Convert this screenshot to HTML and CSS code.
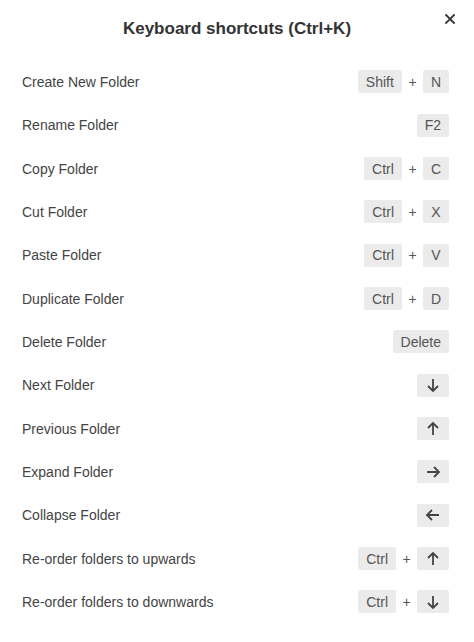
FILE: index.html
```html
<!DOCTYPE html>
<html lang="en">
<head>
    <meta charset="UTF-8">
    <meta name="viewport" content="width=device-width, initial-scale=1.0">
    <title>Keyboard shortcuts</title>
    <link rel="stylesheet" href="styles.css">
</head>
<body>
    <div class="dialog">
        <header class="dialog-header">
            <h1>Keyboard shortcuts (Ctrl+K)</h1>
            <button class="close-btn" aria-label="Close">
                <svg width="10" height="10" viewBox="0 0 10 10">
                    <path d="M1 1 L9 9 M9 1 L1 9" stroke="#333" stroke-width="1.8" stroke-linecap="square"/>
                </svg>
            </button>
        </header>

        <ul class="shortcut-list">
            <li class="row">
                <span class="label">Create New Folder</span>
                <span class="keys"><kbd>Shift</kbd><span class="plus">+</span><kbd>N</kbd></span>
            </li>
            <li class="row">
                <span class="label">Rename Folder</span>
                <span class="keys"><kbd>F2</kbd></span>
            </li>
            <li class="row">
                <span class="label">Copy Folder</span>
                <span class="keys"><kbd>Ctrl</kbd><span class="plus">+</span><kbd>C</kbd></span>
            </li>
            <li class="row">
                <span class="label">Cut Folder</span>
                <span class="keys"><kbd>Ctrl</kbd><span class="plus">+</span><kbd>X</kbd></span>
            </li>
            <li class="row">
                <span class="label">Paste Folder</span>
                <span class="keys"><kbd>Ctrl</kbd><span class="plus">+</span><kbd>V</kbd></span>
            </li>
            <li class="row">
                <span class="label">Duplicate Folder</span>
                <span class="keys"><kbd>Ctrl</kbd><span class="plus">+</span><kbd>D</kbd></span>
            </li>
            <li class="row">
                <span class="label">Delete Folder</span>
                <span class="keys"><kbd>Delete</kbd></span>
            </li>
            <li class="row">
                <span class="label">Next Folder</span>
                <span class="keys"><kbd class="arrow"><svg viewBox="0 0 16 16"><path d="M8 2 V14 M3 9 L8 14 L13 9"/></svg></kbd></span>
            </li>
            <li class="row">
                <span class="label">Previous Folder</span>
                <span class="keys"><kbd class="arrow"><svg viewBox="0 0 16 16"><path d="M8 14 V2 M3 7 L8 2 L13 7"/></svg></kbd></span>
            </li>
            <li class="row">
                <span class="label">Expand Folder</span>
                <span class="keys"><kbd class="arrow"><svg viewBox="0 0 16 16"><path d="M2 8 H14 M9 3 L14 8 L9 13"/></svg></kbd></span>
            </li>
            <li class="row">
                <span class="label">Collapse Folder</span>
                <span class="keys"><kbd class="arrow"><svg viewBox="0 0 16 16"><path d="M14 8 H2 M7 3 L2 8 L7 13"/></svg></kbd></span>
            </li>
            <li class="row">
                <span class="label">Re-order folders to upwards</span>
                <span class="keys"><kbd>Ctrl</kbd><span class="plus">+</span><kbd class="arrow"><svg viewBox="0 0 16 16"><path d="M8 14 V2 M3 7 L8 2 L13 7"/></svg></kbd></span>
            </li>
            <li class="row">
                <span class="label">Re-order folders to downwards</span>
                <span class="keys"><kbd>Ctrl</kbd><span class="plus">+</span><kbd class="arrow"><svg viewBox="0 0 16 16"><path d="M8 2 V14 M3 9 L8 14 L13 9"/></svg></kbd></span>
            </li>
        </ul>
    </div>
</body>
</html>
```

FILE: styles.css
```css
body {
    font-family: "Liberation Sans", Arial, sans-serif;
    margin: 0;
    padding: 0;
    background-color: #ffffff;
    color: #444444;
}

.dialog {
    position: relative;
    width: 474px;
    box-sizing: border-box;
    padding: 0 25px 0 22px;
}

.dialog-header {
    padding: 19px 0 21.33px;
    text-align: center;
}

.dialog-header h1 {
    margin: 0;
    font-size: 17px;
    line-height: 20px;
    font-weight: bold;
    color: #333333;
    padding-left: 3px;
}

.close-btn {
    position: absolute;
    top: 12px;
    right: 17px;
    width: 14px;
    height: 14px;
    padding: 2px;
    border: none;
    background: none;
    cursor: pointer;
    display: flex;
    align-items: center;
    justify-content: center;
}

.shortcut-list {
    list-style: none;
    margin: 0;
    padding: 0;
}

.row {
    display: flex;
    align-items: center;
    justify-content: space-between;
    height: 43.33px;
    font-size: 14px;
}

.keys {
    display: flex;
    align-items: center;
    gap: 6px;
}

kbd {
    font-family: "Liberation Sans", Arial, sans-serif;
    font-size: 14px;
    line-height: 16px;
    color: #555555;
    background-color: #ebebeb;
    border-radius: 2px;
    padding: 3.5px 8px;
    min-width: 10px;
    text-align: center;
}

kbd.arrow {
    display: flex;
    align-items: center;
    justify-content: center;
    padding: 3.5px 8px;
}

kbd.arrow svg {
    width: 16px;
    height: 16px;
    fill: none;
    stroke: #444444;
    stroke-width: 1.8;
}

.plus {
    color: #555555;
    font-size: 14px;
    width: 8px;
    text-align: center;
    margin: 0 0.5px;
}
```
